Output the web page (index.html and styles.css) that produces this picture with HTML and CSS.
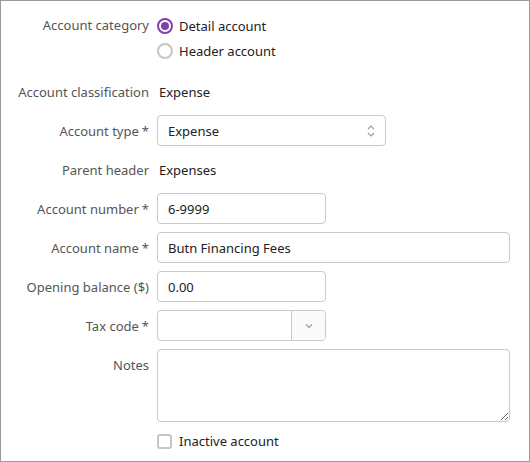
FILE: index.html
```html
<!DOCTYPE html>
<html>
<head>
<meta charset="utf-8">
<link rel="stylesheet" href="styles.css">
</head>
<body>
<div class="frame">
  <div class="form">
    <div class="row row-category">
      <div class="label label-top">Account category</div>
      <div class="radios">
        <label class="option"><span class="radio radio-on"><span class="dot"></span></span><span class="opt-text">Detail account</span></label>
        <label class="option"><span class="radio"></span><span class="opt-text">Header account</span></label>
      </div>
    </div>
    <div class="row">
      <div class="label">Account classification</div>
      <div class="value">Expense</div>
    </div>
    <div class="row">
      <div class="label">Account type<span class="req">*</span></div>
      <div class="field w-select select">
        <span class="field-text">Expense</span>
        <svg class="updown" width="10" height="14" viewBox="0 0 10 14"><path d="M2 5 L5 2 L8 5 M2 9 L5 12 L8 9" fill="none" stroke="#9a9a9a" stroke-width="1.1"/></svg>
      </div>
    </div>
    <div class="row">
      <div class="label">Parent header</div>
      <div class="value">Expenses</div>
    </div>
    <div class="row">
      <div class="label">Account number<span class="req">*</span></div>
      <div class="field w-short"><span class="field-text">6-9999</span></div>
    </div>
    <div class="row">
      <div class="label">Account name<span class="req">*</span></div>
      <div class="field w-long"><span class="field-text">Butn Financing Fees</span></div>
    </div>
    <div class="row">
      <div class="label">Opening balance ($)</div>
      <div class="field w-short"><span class="field-text">0.00</span></div>
    </div>
    <div class="row">
      <div class="label">Tax code<span class="req">*</span></div>
      <div class="field w-short combo">
        <span class="combo-input"></span>
        <span class="combo-btn"><svg width="10" height="6" viewBox="0 0 10 6"><path d="M2 1.5 L5 4.5 L8 1.5" fill="none" stroke="#9a9a9a" stroke-width="1.1"/></svg></span>
      </div>
    </div>
    <div class="row row-notes">
      <div class="label label-notes">Notes</div>
      <textarea class="notes"></textarea>
    </div>
    <div class="row row-check">
      <div class="label"></div>
      <label class="option option-check"><span class="checkbox"></span><span class="opt-text">Inactive account</span></label>
    </div>
  </div>
</div>
</body>
</html>
```

FILE: styles.css
```css
* { box-sizing: border-box; }
html, body { margin: 0; padding: 0; background: #fff; }
body {
  font-family: "Noto Sans", "Open Sans", sans-serif;
  font-size: 13px;
  color: #222;
}
.frame {
  width: 530px;
  height: 462px;
  border: 1px solid #9b9b9b;
  padding-top: 12px;
}
.form {
  display: flex;
  flex-direction: column;
  gap: 8px;
}
.row {
  display: grid;
  grid-template-columns: 148px 1fr;
  column-gap: 8px;
  align-items: center;
  min-height: 31px;
}
.row-category {
  align-items: start;
  margin-bottom: 5px;
}
.label {
  text-align: right;
  color: #555;
  white-space: nowrap;
  line-height: 18px;
}
.label-top { padding-top: 3px; }
.req { margin-left: 3px; color: #555; }
.value { color: #222; padding-left: 2px; line-height: 18px; }
.radios { display: flex; flex-direction: column; }
.option {
  display: flex;
  align-items: center;
  height: 25px;
  gap: 6px;
  color: #222;
}
.option-check { height: 22px; }
.radio {
  width: 16px;
  height: 16px;
  border-radius: 50%;
  border: 2px solid #c6c6c6;
  display: flex;
  align-items: center;
  justify-content: center;
  flex: none;
}
.radio-on { border-color: #8241aa; }
.dot { width: 8px; height: 8px; border-radius: 50%; background: #8241aa; }
.field {
  height: 31px;
  border: 1px solid #c9c9c9;
  border-radius: 4px;
  display: flex;
  align-items: center;
  background: #fff;
}
.field-text { padding-left: 10px; color: #222; }
.w-select { width: 229px; justify-content: space-between; }
.w-short { width: 169px; }
.w-long { width: 353px; }
.updown { margin-right: 9px; }
.combo { align-items: stretch; overflow: hidden; }
.combo-input { flex: 1; }
.combo-btn {
  width: 34px;
  border-left: 1px solid #c9c9c9;
  background: #fafafa;
  display: flex;
  align-items: center;
  justify-content: center;
}
.row-notes { align-items: start; }
.label-notes { padding-top: 7px; }
.notes {
  display: block;
  width: 353px;
  height: 73px;
  border: 1px solid #c9c9c9;
  border-radius: 4px;
  margin: 0;
  resize: vertical;
  font-family: inherit;
  font-size: 13px;
}
.row-check { min-height: 22px; }
.checkbox {
  width: 15px;
  height: 15px;
  border: 2px solid #c6c6c6;
  border-radius: 3px;
  flex: none;
  margin-right: 1px;
}
```
